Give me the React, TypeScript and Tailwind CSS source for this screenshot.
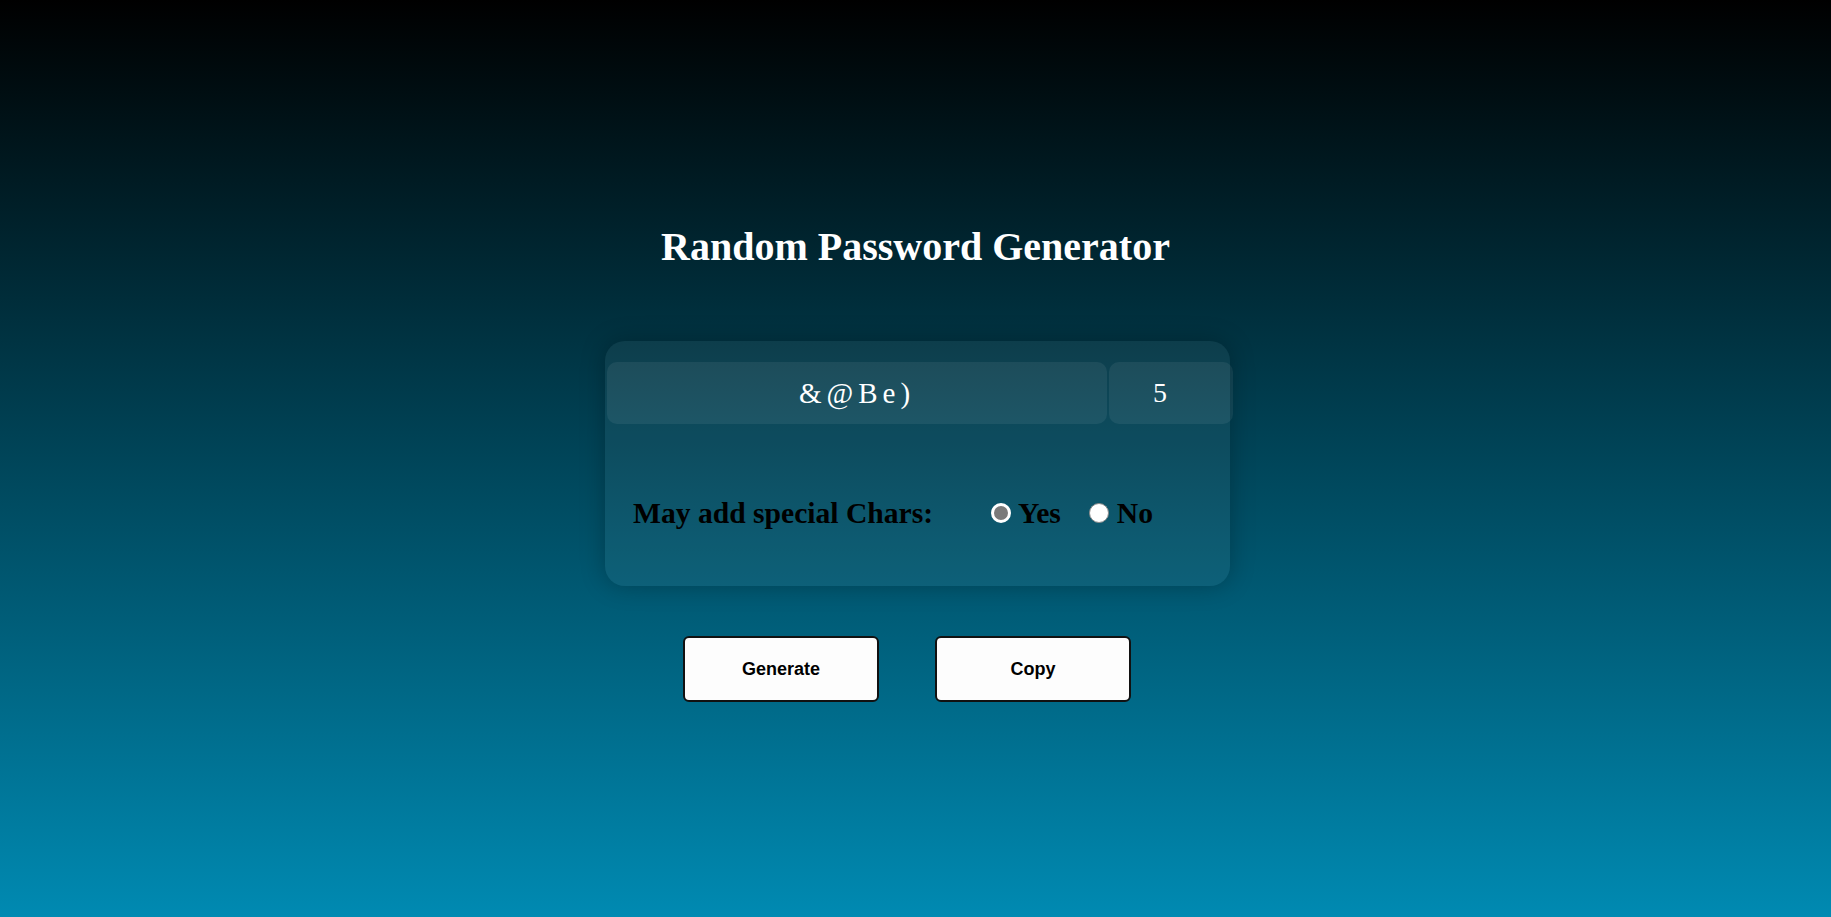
import { useState } from 'react';

const chars = 'ABCDEFGHIJKLMNOPQRSTUVWXYZabcdefghijklmnopqrstuvwxyz0123456789';
const specials = '!@#$%^&*()_+-=[]{}';

export default function App() {
  const [password, setPassword] = useState('&@Be)');
  const [length, setLength] = useState('5');
  const [special, setSpecial] = useState(true);

  const generate = () => {
    const pool = special ? chars + specials : chars;
    const n = parseInt(length) || 5;
    let out = '';
    for (let i = 0; i < n; i++) out += pool[Math.floor(Math.random() * pool.length)];
    setPassword(out);
  };

  return (
    <div className="min-h-screen w-full flex flex-col items-center bg-[linear-gradient(to_bottom,#000000,#008ab2)] font-['Liberation_Serif',serif]">
      {/* Title */}
      <h1 className="mt-[223px] text-[40px] leading-[48px] font-bold text-white">
        Random Password Generator
      </h1>

      {/* Card */}
      <div className="mt-[70px] ml-[4px] w-[625px] h-[245px] rounded-[20px] bg-white/[0.05] shadow-[0_0_25px_rgba(0,0,0,0.25)] flex flex-col">
        <div className="pt-[21px] pl-[2px] flex gap-[2px]">
          <input
            value={password}
            readOnly
            className="w-[500px] h-[62px] shrink-0 rounded-[10px] bg-white/[0.065] text-white text-center text-[29px] tracking-[5px] outline-none"
          />
          <input
            value={length}
            onChange={(e) => setLength(e.target.value)}
            className="w-[124px] h-[62px] shrink-0 rounded-[10px] bg-white/[0.065] text-white text-center text-[28px] pr-[22px] outline-none"
          />
        </div>

        <div className="mt-[72px] pl-[28px] flex items-center text-[29.6px] leading-[34px] font-bold text-black">
          <span>May add special Chars:</span>
          <label className="ml-[58px] flex items-center gap-[7px]">
            <input
              type="radio"
              name="special"
              checked={special}
              onChange={() => setSpecial(true)}
              className="appearance-none w-[20px] h-[20px] rounded-full bg-white border border-[#8a8a8a] checked:bg-[#7a7a7a] checked:border-[3px] checked:border-white"
            />
            Yes
          </label>
          <label className="ml-[28px] flex items-center gap-[8px]">
            <input
              type="radio"
              name="special"
              checked={!special}
              onChange={() => setSpecial(false)}
              className="appearance-none w-[20px] h-[20px] rounded-full bg-white border border-[#8a8a8a] checked:bg-[#7a7a7a] checked:border-[3px] checked:border-white"
            />
            No
          </label>
        </div>
      </div>

      {/* Buttons */}
      <div className="mt-[50px] pr-[17px] flex gap-[56px] font-['Liberation_Sans',sans-serif]">
        <button
          onClick={generate}
          className="w-[196px] h-[66px] rounded-[6px] border-2 border-[#111] bg-[#fdfdfd] text-[18px] font-bold text-black"
        >
          Generate
        </button>
        <button
          onClick={() => navigator.clipboard?.writeText(password)}
          className="w-[196px] h-[66px] rounded-[6px] border-2 border-[#111] bg-[#fdfdfd] text-[18px] font-bold text-black"
        >
          Copy
        </button>
      </div>
    </div>
  );
}
